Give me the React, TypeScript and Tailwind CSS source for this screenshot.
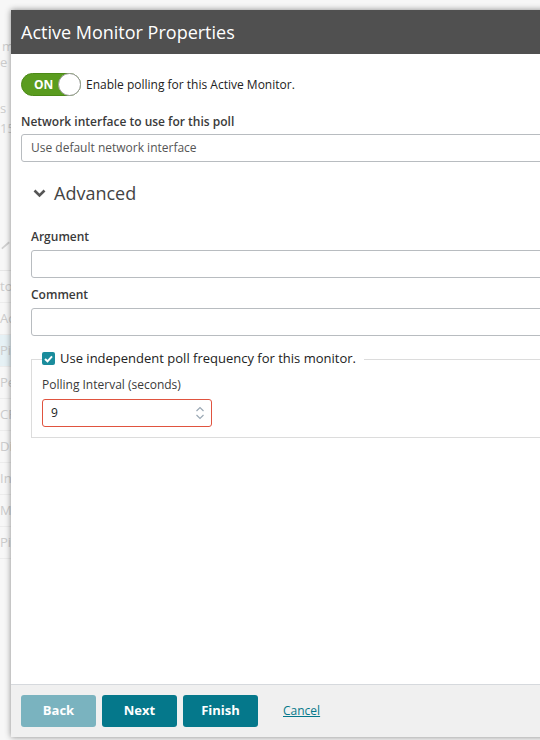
import React from 'react';

const font = { fontFamily: '"Open Sans", "Noto Sans", sans-serif' };

const bgRows = ['to', 'Ac', 'Pi', 'Pe', 'CF', 'Di', 'In', 'M', 'Pi'];

function Backdrop() {
  return (
    <div className="absolute left-0 top-0 bottom-0 w-[11px] overflow-hidden bg-[#f7f7f7] text-[13px] text-[#cccccc] whitespace-nowrap">
      <div className="pt-[38px] pl-[2px] leading-[16px]">m</div>
      <div className="leading-[16px]">e</div>
      <div className="mt-[28px] leading-[20px]">s</div>
      <div className="leading-[20px]">15</div>
      <div className="mt-[88px] h-[24px] flex items-end">
        <svg width="12" height="10" viewBox="0 0 12 10">
          <path d="M2 9 L10 2" stroke="#d0d0d0" strokeWidth="2" />
        </svg>
      </div>
      <div className="mt-[20px] border-t border-[#e6e6e6] w-[40px]">
        {bgRows.map((r, i) => (
          <div
            key={i}
            className={`h-[32px] flex items-center border-b border-[#ececec] ${i === 2 ? 'bg-[#e6f1f5]' : ''}`}
          >
            {r}
          </div>
        ))}
      </div>
    </div>
  );
}

function Field({ label }: { label: string }) {
  return (
    <div className="mt-[9px]">
      <div className="text-[12px] font-semibold text-[#3a3a3a] leading-[16px]">{label}</div>
      <div className="mt-[5px] h-[28px] border border-[#b8bcc0] rounded-[3px] bg-white" />
    </div>
  );
}

export default function App() {
  return (
    <div className="relative w-[540px] h-[740px] overflow-hidden bg-[#f7f7f7]" style={font}>
      <Backdrop />
      <div className="absolute left-[11px] top-[10px] w-[560px] h-[727px] flex flex-col bg-white shadow-[0_0_6px_rgba(0,0,0,0.45)]">
        <div className="h-[44px] shrink-0 bg-[#505050] flex items-center pl-[10px]">
          <span className="text-white text-[18px] leading-none">Active Monitor Properties</span>
        </div>

        <div className="flex-1 pl-[10px] pt-[19px]">
          <div className="flex items-center gap-[5px]">
            <div className="relative w-[60px] h-[23px] rounded-full bg-[#5a9c1f] border border-[#4c8a17] flex items-center">
              <span className="ml-[12px] text-white text-[12px] font-bold leading-none">ON</span>
              <div className="absolute right-[-1px] top-[-1px] w-[23px] h-[23px] rounded-full bg-white border border-[#9a9a9a]" />
            </div>
            <span className="text-[12px] text-[#222] leading-none">Enable polling for this Active Monitor.</span>
          </div>

          <div className="mt-[18px] text-[12px] font-semibold text-[#3a3a3a] leading-[16px]">
            Network interface to use for this poll
          </div>
          <div className="mt-[4px] h-[28px] border border-[#b8bcc0] rounded-[3px] flex items-center pl-[9px] text-[12px] text-[#555]">
            Use default network interface
          </div>

          <div className="pl-[10px]">
            <div className="mt-[22px] flex items-center gap-[8px] text-[#444]">
              <svg width="13" height="9" viewBox="0 0 13 9" className="ml-[2px]">
                <path d="M1.5 1.5 L6.5 6.5 L11.5 1.5" fill="none" stroke="#555" strokeWidth="2.6" />
              </svg>
              <span className="text-[18px] leading-none">Advanced</span>
            </div>

            <div className="mt-[27px]">
              <Field label="Argument" />
              <Field label="Comment" />
            </div>

            <div className="mt-[23px] relative border border-[#dcdcdc] h-[79px] pl-[10px]">
              <div className="absolute left-[10px] top-[-8px] bg-white flex items-center gap-[5px] pr-[8px]">
                <span className="w-[13px] h-[13px] rounded-[2px] bg-[#1a8c9c] flex items-center justify-center">
                  <svg width="9" height="8" viewBox="0 0 9 8">
                    <path d="M1 4 L3.5 6.3 L8 1.3" fill="none" stroke="white" strokeWidth="2" />
                  </svg>
                </span>
                <span className="text-[13px] text-[#222] leading-none">
                  Use independent poll frequency for this monitor.
                </span>
              </div>
              <div className="pt-[17px] text-[12px] text-[#3a3a3a] leading-[16px]">Polling Interval (seconds)</div>
              <div className="mt-[6px] w-[170px] h-[28px] border border-[#e0533f] rounded-[3px] flex items-center justify-between pl-[8px] pr-[6px] text-[12px] text-[#222]">
                <span>9</span>
                <svg width="10" height="16" viewBox="0 0 10 16">
                  <path d="M1.5 6 L5 2.5 L8.5 6" fill="none" stroke="#9aa8b4" strokeWidth="1.2" />
                  <path d="M1.5 10 L5 13.5 L8.5 10" fill="none" stroke="#9aa8b4" strokeWidth="1.2" />
                </svg>
              </div>
            </div>
          </div>
        </div>

        <div className="h-[53px] shrink-0 border-t border-[#d6d9dd] bg-[#f0f0f0] flex items-center pl-[10px] gap-[6px]">
          <button className="w-[75px] h-[32px] rounded-[3px] bg-[#7ab3bf] text-white text-[13px] font-bold">Back</button>
          <button className="w-[75px] h-[32px] rounded-[3px] bg-[#05788b] text-white text-[13px] font-bold">Next</button>
          <button className="w-[75px] h-[32px] rounded-[3px] bg-[#05788b] text-white text-[13px] font-bold">Finish</button>
          <a className="ml-[19px] text-[12px] text-[#05788b] underline">Cancel</a>
        </div>
      </div>
    </div>
  );
}
